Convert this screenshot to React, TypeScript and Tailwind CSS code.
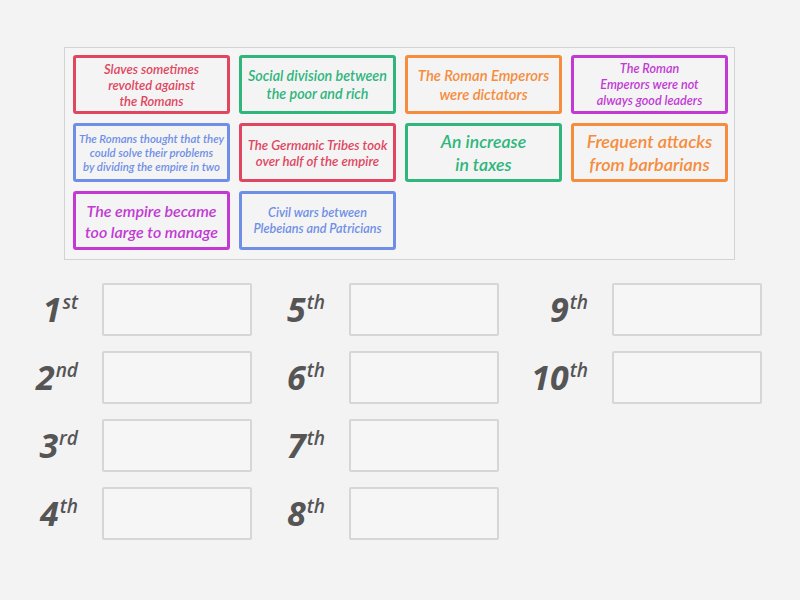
const cards = [
  { text: ["Slaves sometimes", "revolted against", "the Romans"], color: "border-[#e0465f] text-[#e0465f]", size: "text-[13px] leading-[16px]" },
  { text: ["Social division between", "the poor and rich"], color: "border-[#2fb67c] text-[#2fb67c]", size: "text-[14.3px] leading-[18px]" },
  { text: ["The Roman Emperors", "were dictators"], color: "border-[#f58d3d] text-[#f58d3d]", size: "text-[14.8px] leading-[19px]" },
  { text: ["The Roman", "Emperors were not", "always good leaders"], color: "border-[#c23ad3] text-[#c23ad3]", size: "text-[12.6px] leading-[16px]" },
  { text: ["The Romans thought that they", "could solve their problems", "by dividing the empire in two"], color: "border-[#6f8fe6] text-[#6f8fe6]", size: "text-[11.4px] leading-[14px]" },
  { text: ["The Germanic Tribes took", "over half of the empire"], color: "border-[#e0465f] text-[#e0465f]", size: "text-[13.2px] leading-[16px]" },
  { text: ["An increase", "in taxes"], color: "border-[#2fb67c] text-[#2fb67c]", size: "text-[17.6px] leading-[23px]" },
  { text: ["Frequent attacks", "from barbarians"], color: "border-[#f58d3d] text-[#f58d3d]", size: "text-[18px] leading-[23px]" },
  { text: ["The empire became", "too large to manage"], color: "border-[#c23ad3] text-[#c23ad3]", size: "text-[16px] leading-[21px]" },
  { text: ["Civil wars between", "Plebeians and Patricians"], color: "border-[#6f8fe6] text-[#6f8fe6]", size: "text-[12.6px] leading-[16px]" },
];

const columns = [
  { labelW: "w-[58px]", ml: "ml-[20px]", items: [["1", "st"], ["2", "nd"], ["3", "rd"], ["4", "th"]] },
  { labelW: "w-[58px]", ml: "ml-[15px]", items: [["5", "th"], ["6", "th"], ["7", "th"], ["8", "th"]] },
  { labelW: "w-[68px]", ml: "ml-[21px]", items: [["9", "th"], ["10", "th"]] },
];

function Card({ card }: any) {
  return (
    <div className={`h-[59px] flex flex-col items-center justify-center text-center border-[3px] rounded-[3px] bg-[#f4f4f5] italic font-semibold ${card.color} ${card.size}`}>
      {card.text.map((line: string, i: number) => (
        <div key={i} className="whitespace-nowrap">{line}</div>
      ))}
    </div>
  );
}

export default function App() {
  return (
    <div className="w-[800px] h-[600px] bg-[#f4f3f4] overflow-hidden" style={{ fontFamily: "Lato, 'Open Sans', sans-serif" }}>
      <div className="pt-[47px] pl-[64px]">
        <div className="w-[671px] h-[213px] border border-[#d3d3d3] bg-[#f5f5f6] pt-[7px] pl-[8px]">
          <div className="grid grid-cols-[157px_157px_157px_157px] gap-x-[9px] gap-y-[9px]">
            {cards.map((c, i) => (
              <Card key={i} card={c} />
            ))}
          </div>
        </div>
      </div>

      <div className="flex mt-[23px]">
        {columns.map((col, ci) => (
          <div key={ci} className={`flex flex-col gap-y-[15px] ${col.ml}`}>
            {col.items.map(([n, s], i) => (
              <div key={i} className="flex items-center">
                <div className={`${col.labelW} text-right text-[#555555] italic font-bold`} style={{ fontFamily: "'Open Sans', sans-serif" }}>
                  <span className="text-[34px] leading-none">{n}</span>
                  <sup className="text-[19px] font-semibold relative top-[-13px] ml-[1px]">{s}</sup>
                </div>
                <div className="ml-[24px] w-[150px] h-[53px] border-2 border-[#d6d6d6] rounded-[2px] bg-[#f6f6f6]" />
              </div>
            ))}
          </div>
        ))}
      </div>
    </div>
  );
}
